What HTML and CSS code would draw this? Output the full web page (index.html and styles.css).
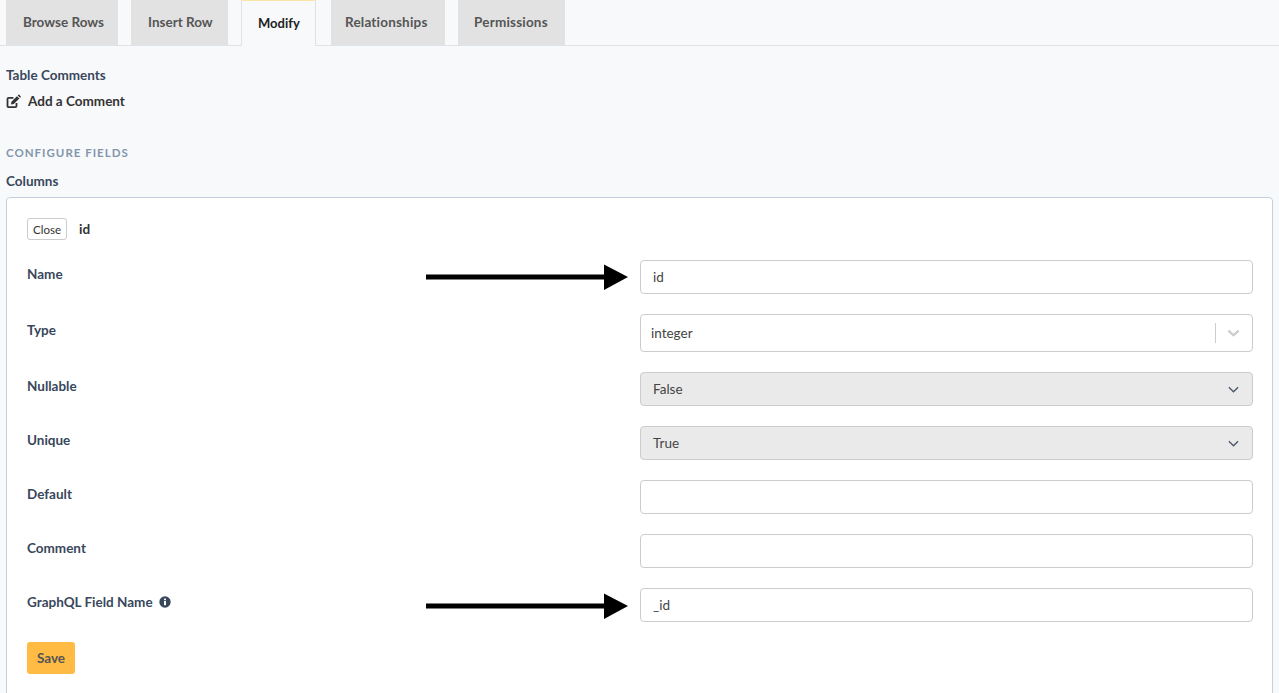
FILE: index.html
```html
<!DOCTYPE html>
<html lang="en">

<head>
    <meta charset="UTF-8">
    <meta name="viewport" content="width=device-width, initial-scale=1.0">
    <title>Modify Table</title>
    <link rel="stylesheet" href="styles.css">
</head>

<body>
    <ul class="tabs">
        <li class="tab tab-browse">Browse Rows</li>
        <li class="tab tab-insert">Insert Row</li>
        <li class="tab tab-modify active">Modify</li>
        <li class="tab tab-rel">Relationships</li>
        <li class="tab tab-perm">Permissions</li>
    </ul>

    <div class="content">
        <h4 class="sub-title comments-title">Table Comments</h4>
        <div class="add-comment">
            <svg class="edit-icon" viewBox="0 0 16 16" width="15" height="15">
                <path d="M11.200 9.500v3.300a1.300 1.300 0 0 1-1.300 1.300H2.900a1.300 1.300 0 0 1-1.300-1.300V5.400a1.300 1.300 0 0 1 1.300-1.300h5" fill="none" stroke="#333" stroke-width="1.900" />
                <path d="M5.800 8.200 11.700 2.300l2.500 2.500-5.900 5.900-3 .5z" fill="#333" />
                <path d="M12.500 1.500l.6-.6a.8.8 0 0 1 1.100 0l1.400 1.400a.8.8 0 0 1 0 1.100l-.6.6z" fill="#333" />
            </svg>
            <span>Add a Comment</span>
        </div>

        <h4 class="section-title">CONFIGURE FIELDS</h4>
        <h4 class="sub-title columns-title">Columns</h4>

        <div class="card">
            <div class="card-head">
                <button class="close-btn">Close</button>
                <b>id</b>
            </div>

            <div class="form-row">
                <label>Name</label>
                <svg class="arrow" viewBox="0 0 202 26" width="202" height="26">
                    <path d="M0 10.5h178v-10l24 12.5-24 13v-10.500H0z" fill="#000" />
                </svg>
                <input class="field" type="text" value="id">
            </div>

            <div class="form-row form-row-type">
                <label>Type</label>
                <div class="field field-tall">
                    <span>integer</span>
                    <span class="sep"></span>
                    <svg class="chev" viewBox="0 0 14 8" width="13" height="8">
                        <path d="M1.500 1.500 7 6.500l5.500-5" fill="none" stroke="#ccc" stroke-width="2.400" />
                    </svg>
                </div>
            </div>

            <div class="form-row">
                <label>Nullable</label>
                <div class="field field-select">
                    <span>False</span>
                    <svg class="chev" viewBox="0 0 12 7" width="11" height="7">
                        <path d="M1 1l5 5 5-5" fill="none" stroke="#4a5568" stroke-width="1.400" />
                    </svg>
                </div>
            </div>

            <div class="form-row">
                <label>Unique</label>
                <div class="field field-select">
                    <span>True</span>
                    <svg class="chev" viewBox="0 0 12 7" width="11" height="7">
                        <path d="M1 1l5 5 5-5" fill="none" stroke="#4a5568" stroke-width="1.400" />
                    </svg>
                </div>
            </div>

            <div class="form-row">
                <label>Default</label>
                <input class="field" type="text">
            </div>

            <div class="form-row">
                <label>Comment</label>
                <input class="field" type="text">
            </div>

            <div class="form-row">
                <label>GraphQL Field Name
                    <svg class="info-icon" viewBox="0 0 12 12" width="12" height="12">
                        <circle cx="6" cy="6" r="5.700" fill="#39475c" />
                        <rect x="5" y="5" width="2" height="4.200" fill="#fff" />
                        <rect x="5" y="2.600" width="2" height="1.600" fill="#fff" />
                    </svg>
                </label>
                <svg class="arrow arrow-low" viewBox="0 0 202 26" width="202" height="26">
                    <path d="M0 10.5h178v-10l24 12.5-24 13v-10.500H0z" fill="#000" />
                </svg>
                <input class="field" type="text" value="_id">
            </div>

            <button class="save-btn">Save</button>
        </div>
    </div>
</body>

</html>
```

FILE: styles.css
```css
html,
body {
    height: 693px;
    overflow: hidden;
}

body {
    margin: 0;
    padding: 0;
    background: #f8f9fb;
    font-family: Lato, sans-serif;
    font-size: 13.5px;
    color: #333;
}

.tabs {
    display: flex;
    list-style: none;
    margin: 0;
    padding: 0 0 0 6px;
    height: 45px;
    border-bottom: 1px solid #dfe3e8;
}

.tab {
    box-sizing: border-box;
    height: 45px;
    padding-left: 17px;
    background: #e2e2e2;
    color: #555;
    font-size: 13.5px;
    font-weight: 700;
    line-height: 45px;
}

.tab-browse {
    width: 112px;
    margin-right: 13px;
}

.tab-insert {
    width: 97px;
    margin-right: 13px;
}

.tab-modify {
    width: 75px;
    margin-right: 15px;
    font-size: 13px;
}

.tab-rel {
    width: 114px;
    margin-right: 13px;
    padding-left: 14px;
    letter-spacing: .2px;
}

.tab-perm {
    width: 107px;
    padding-left: 16px;
    letter-spacing: .2px;
}

.tab.active {
    height: 46px;
    padding-left: 16px;
    background: #f8f9fb;
    color: #222;
    border-left: 1px solid #dfe3e8;
    border-right: 1px solid #dfe3e8;
    border-top: 1px solid #ffe4a8;
}

.content {
    padding: 0 6px;
}

.sub-title {
    margin: 0;
    color: #39475c;
    font-size: 13.5px;
    font-weight: 700;
    line-height: 16px;
}

.comments-title {
    padding-top: 21px;
}

.add-comment {
    display: flex;
    align-items: center;
    gap: 7px;
    margin-top: 10px;
    height: 16px;
    font-size: 13.5px;
    font-weight: 700;
}

.edit-icon {
    flex: none;
}

.section-title {
    margin: 36px 0 0;
    color: #8496ad;
    font-size: 11.5px;
    font-weight: 700;
    letter-spacing: 1px;
    line-height: 16px;
}

.columns-title {
    margin-top: 12px;
}

.card {
    box-sizing: border-box;
    margin-top: 8px;
    height: 520px;
    padding: 20px 19px 0 20px;
    background: #fff;
    border: 1px solid #c3d0dc;
    border-radius: 4px;
}

.card-head {
    display: flex;
    align-items: center;
    gap: 12px;
    height: 22px;
    font-size: 13.5px;
    margin-bottom: 20px;
}

.close-btn {
    box-sizing: border-box;
    width: 40px;
    height: 22px;
    padding: 0;
    background: #fff;
    border: 1px solid #ccc;
    border-radius: 3px;
    color: #333;
    font-family: inherit;
    font-size: 11.5px;
}

.form-row {
    position: relative;
    display: flex;
    align-items: flex-start;
    margin-bottom: 20px;
}

.form-row label {
    flex: 1;
    display: flex;
    align-items: center;
    gap: 6px;
    height: 28px;
    color: #39475c;
    font-size: 13.5px;
    font-weight: 700;
}

.form-row-type label {
    height: 32px;
}

.arrow {
    position: absolute;
    left: 399px;
    top: 4px;
}

.arrow-low {
    top: 5px;
}

.field {
    box-sizing: border-box;
    display: flex;
    align-items: center;
    width: 613px;
    height: 34px;
    padding: 0 12px;
    background: #fff;
    border: 1px solid #ccc;
    border-radius: 4px;
    color: #444;
    font-family: inherit;
    font-size: 13.5px;
    outline: none;
}

.field-tall {
    height: 38px;
    padding: 0 12px 0 10px;
}

.field-tall span:first-child {
    flex: 1;
}

.field-tall .sep {
    width: 1px;
    height: 20px;
    margin-right: 11px;
    background: #ccc;
}

.field-select {
    justify-content: space-between;
    background: #eaeaea;
    padding-right: 13px;
}

.save-btn {
    display: block;
    width: 48px;
    height: 32px;
    margin-top: 0;
    padding: 0;
    background: #ffbb44;
    border: 0;
    border-radius: 3px;
    color: #555;
    font-family: inherit;
    font-size: 13.5px;
    font-weight: 700;
}
```
